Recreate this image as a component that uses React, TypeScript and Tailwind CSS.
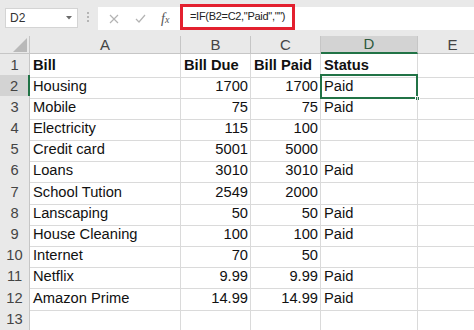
import React from 'react';

type Row = { bill: string; due: string; paid: string; status: string };

const rows: Row[] = [
  { bill: 'Housing', due: '1700', paid: '1700', status: 'Paid' },
  { bill: 'Mobile', due: '75', paid: '75', status: 'Paid' },
  { bill: 'Electricity', due: '115', paid: '100', status: '' },
  { bill: 'Credit card', due: '5001', paid: '5000', status: '' },
  { bill: 'Loans', due: '3010', paid: '3010', status: 'Paid' },
  { bill: 'School Tution', due: '2549', paid: '2000', status: '' },
  { bill: 'Lanscaping', due: '50', paid: '50', status: 'Paid' },
  { bill: 'House Cleaning', due: '100', paid: '100', status: 'Paid' },
  { bill: 'Internet', due: '70', paid: '50', status: '' },
  { bill: 'Netflix', due: '9.99', paid: '9.99', status: 'Paid' },
  { bill: 'Amazon Prime', due: '14.99', paid: '14.99', status: 'Paid' },
];

const columns = ['A', 'B', 'C', 'D', 'E'];
const gridCols = 'grid grid-cols-[30px_151px_70px_70px_97px_70px]';

function FormulaBar() {
  return (
    <div className="flex h-[36px] items-start bg-[#e9e9e9] pt-[6px]">
      {/* name box */}
      <div className="ml-[5px] mt-[2px] flex h-[20px] w-[73px] shrink-0 items-center justify-between border border-[#d4d4d4] bg-white pl-[4px] pr-[5px] text-[12px] text-[#333]">
        <span>D2</span>
        <svg width="6" height="4" viewBox="0 0 6 4">
          <path d="M0 0h6L3 3.5z" fill="#6b6b6b" />
        </svg>
      </div>
      <div className="mx-[9px] mt-[6px] flex flex-col gap-[2px]">
        <span className="block h-[2px] w-[2px] bg-[#b5b5b5]" />
        <span className="block h-[2px] w-[2px] bg-[#b5b5b5]" />
        <span className="block h-[2px] w-[2px] bg-[#b5b5b5]" />
      </div>
      <div className="mt-[1px] flex h-[23px] flex-1 items-center bg-white">
        <div className="flex w-[82px] shrink-0 items-center pl-[11px]">
          <svg width="10" height="10" viewBox="0 0 10 10" className="mr-[16px]">
            <path d="M1 1l8 8M9 1l-8 8" stroke="#b3b3b3" strokeWidth="1.2" />
          </svg>
          <svg width="11" height="9" viewBox="0 0 11 9" className="mr-[15px]">
            <path d="M1 5l3 3L10 1" stroke="#b3b3b3" strokeWidth="1.2" fill="none" />
          </svg>
          <span className="font-['Liberation_Serif',serif] text-[14px] italic text-[#555]">
            f<span className="text-[10px]">x</span>
          </span>
        </div>
        <div className="-mt-[4px] flex h-[26px] w-[115px] shrink-0 items-center whitespace-nowrap border-[3px] border-[#e3202f] pl-[7px] text-[11px] tracking-[-0.3px] text-[#222]">
          =IF(B2=C2,"Paid","")
        </div>
      </div>
    </div>
  );
}

export default function App() {
  return (
    <div className="h-[330px] w-[474px] overflow-hidden bg-white font-['Liberation_Sans',Arial,sans-serif]">
      <FormulaBar />

      {/* column headers */}
      <div className={`${gridCols} h-[17.5px] bg-[#e9e9e9] text-[15px] text-[#444]`}>
        <div className="relative border-b border-r border-[#c6c6c6]">
          <svg width="14" height="14" viewBox="0 0 14 14" className="absolute bottom-[1px] right-[2px]">
            <path d="M14 0v14H0z" fill="#b9b9b9" />
          </svg>
        </div>
        {columns.map((col) => (
          <div
            key={col}
            className={`flex items-center justify-center leading-none ${
              col === 'D'
                ? 'border-b-2 border-r border-b-[#217346] border-r-[#c6c6c6] bg-[#d3d3d3] text-[#2d5a3d]'
                : 'border-b border-r border-[#c6c6c6]'
            }`}
          >
            {col}
          </div>
        ))}
      </div>

      {/* header row */}
      <div className={`${gridCols} h-[21.2px] text-[14.7px] text-[#111]`}>
        <div className="flex items-end justify-center border-b border-r border-[#c6c6c6] bg-[#e9e9e9] pb-[1px] text-[#444]">
          1
        </div>
        {['Bill', 'Bill Due', 'Bill Paid', 'Status'].map((h) => (
          <div key={h} className="flex items-end border-b border-r border-[#dadada] pb-[1px] pl-[3px] font-bold">
            {h}
          </div>
        ))}
        <div className="border-b border-r border-[#dadada]" />
      </div>

      {rows.map((row, i) => {
        const n = i + 2;
        const selected = n === 2;
        return (
          <div key={n} className={`${gridCols} h-[21.2px] text-[14.7px] text-[#111]`}>
            <div
              className={`flex items-end justify-center border-b border-[#c6c6c6] pb-[1px] text-[#444] ${
                selected ? 'border-r-2 border-r-[#217346] bg-[#d3d3d3]' : 'border-r bg-[#e9e9e9]'
              }`}
            >
              {n}
            </div>
            <div className="flex items-end border-b border-r border-[#dadada] pb-[1px] pl-[3px]">{row.bill}</div>
            <div className="flex items-end justify-end border-b border-r border-[#dadada] pb-[1px] pr-[2px]">{row.due}</div>
            <div className="flex items-end justify-end border-b border-r border-[#dadada] pb-[1px] pr-[2px]">{row.paid}</div>
            <div className="relative flex items-end border-b border-r border-[#dadada] pb-[1px] pl-[3px]">
              {row.status}
              {selected && (
                <>
                  <div className="absolute -left-[1px] -top-[1px] bottom-[-1px] right-[-1px] border-2 border-[#217346]" />
                  <div className="absolute -bottom-[3px] -right-[3px] h-[5px] w-[5px] border border-white bg-[#217346]" />
                </>
              )}
            </div>
            <div className="border-b border-r border-[#dadada]" />
          </div>
        );
      })}

      {/* row 13 */}
      <div className={`${gridCols} h-[21.2px] text-[14.7px]`}>
        <div className="flex items-end justify-center border-r border-[#c6c6c6] bg-[#e9e9e9] pb-[1px] text-[#444]">13</div>
        <div className="border-r border-[#dadada]" />
        <div className="border-r border-[#dadada]" />
        <div className="border-r border-[#dadada]" />
        <div className="border-r border-[#dadada]" />
        <div className="border-r border-[#dadada]" />
      </div>
    </div>
  );
}
